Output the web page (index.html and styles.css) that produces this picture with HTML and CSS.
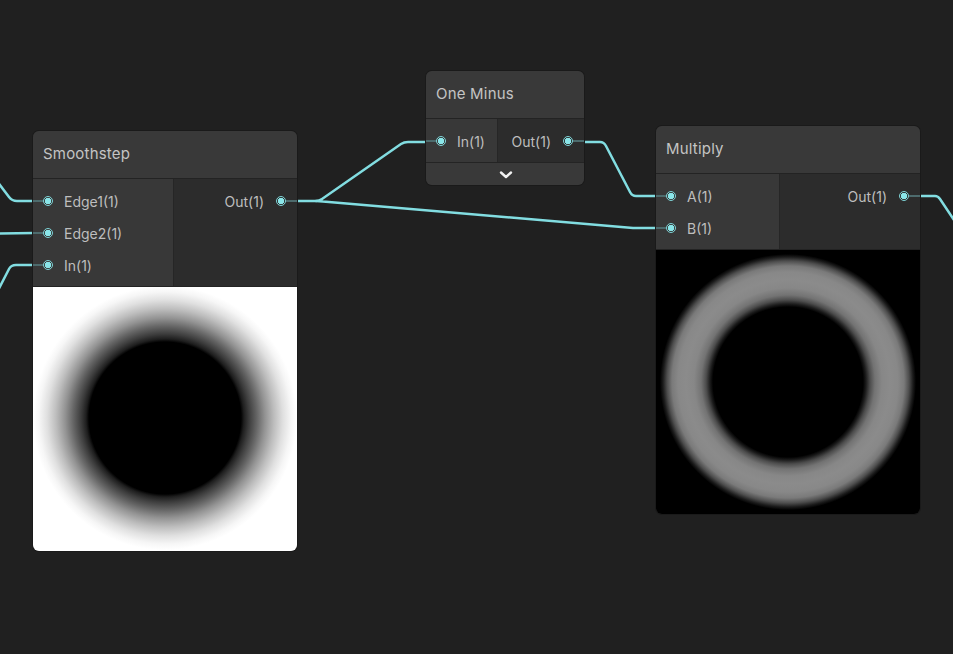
FILE: index.html
```html
<!DOCTYPE html>
<html>
<head>
<meta charset="utf-8">
<link rel="stylesheet" href="styles.css">
</head>
<body>
<div class="canvas">
  <svg class="edges" width="953" height="654" viewBox="0 0 953 654">
    <g fill="none" stroke="#82dde1" stroke-width="2.5" stroke-linejoin="round" stroke-linecap="round">
      <path d="M -10 172 L 9 197 Q 12 201 17 201 L 34 201"/>
      <path d="M -4 233.5 L 34 233"/>
      <path d="M -8 302 L 9 269 Q 11 265 16 265 L 34 265"/>
      <path d="M 296 201 L 316 201 Q 319 201 322 199 L 401 144 Q 404 142 408 142 L 427 142"/>
      <path d="M 316 201 Q 319 201 323 201.5 L 633 228 L 657 228"/>
      <path d="M 583 142 L 600 142 Q 604 142 606 146 L 630 192 Q 632 196 636 196 L 657 196"/>
      <path d="M 919 196 L 935 196 Q 938 196 940 199 L 958 226"/>
    </g>
  </svg>

  <div class="node n-smooth">
    <div class="node-title">Smoothstep</div>
    <div class="ports">
      <div class="inputs in-smooth">
        <div class="port in"><span class="dot"></span><span class="label">Edge1(1)</span></div>
        <div class="port in"><span class="dot"></span><span class="label">Edge2(1)</span></div>
        <div class="port in"><span class="dot"></span><span class="label">In(1)</span></div>
      </div>
      <div class="outputs">
        <div class="port out"><span class="label">Out(1)</span><span class="dot"></span></div>
      </div>
    </div>
    <div class="preview preview-smooth"></div>
  </div>

  <div class="node n-minus">
    <div class="node-title">One Minus</div>
    <div class="ports">
      <div class="inputs in-minus">
        <div class="port in"><span class="dot"></span><span class="label">In(1)</span></div>
      </div>
      <div class="outputs">
        <div class="port out"><span class="label">Out(1)</span><span class="dot"></span></div>
      </div>
    </div>
    <div class="collapse">
      <svg width="14" height="10" viewBox="0 0 14 10"><path d="M 2 2.5 L 7 7 L 12 2.5" fill="none" stroke="#f2f2f2" stroke-width="2.4" stroke-linecap="round" stroke-linejoin="round"/></svg>
    </div>
  </div>

  <div class="node n-mult">
    <div class="node-title">Multiply</div>
    <div class="ports">
      <div class="inputs in-mult">
        <div class="port in"><span class="dot"></span><span class="label">A(1)</span></div>
        <div class="port in"><span class="dot"></span><span class="label">B(1)</span></div>
      </div>
      <div class="outputs">
        <div class="port out"><span class="label">Out(1)</span><span class="dot"></span></div>
      </div>
    </div>
    <div class="preview preview-mult"></div>
  </div>
</div>
</body>
</html>
```

FILE: styles.css
```css
html, body {
  margin: 0;
  padding: 0;
  background: #202020;
}
body {
  font-family: Inter, "Noto Sans", "Liberation Sans", sans-serif;
  overflow: hidden;
}
.canvas {
  position: relative;
  width: 953px;
  height: 654px;
  background: #202020;
}
.edges {
  position: absolute;
  left: 0;
  top: 0;
  z-index: 0;
}
.node {
  position: absolute;
  z-index: 1;
  background: #2b2b2b;
  border-radius: 6px;
  overflow: hidden;
  box-shadow: 0 0 0 1px #1a1a1a;
}
.n-smooth { left: 33px; top: 131px; width: 264px; }
.n-minus  { left: 426px; top: 71px; width: 158px; }
.n-mult   { left: 656px; top: 126px; width: 264px; }

.node-title {
  background: #393939;
  border-bottom: 1px solid #232323;
  display: flex;
  align-items: center;
  padding-left: 10px;
  padding-bottom: 2px;
  box-sizing: border-box;
  height: 48px;
  font-size: 15px;
  color: #c4c4c4;
  letter-spacing: 0.2px;
}
.ports {
  display: flex;
}
.inputs {
  background: #383838;
  border-right: 1px solid #262626;
  padding: 6px 0 5px;
}
.in-smooth { width: 140px; }
.in-minus  { width: 71px; }
.in-mult   { width: 123px; }
.outputs {
  flex: 1;
  background: #2c2c2c;
  padding: 6px 0 5px;
}
.port {
  height: 32px;
  display: flex;
  align-items: center;
  position: relative;
  font-size: 14px;
  color: #bebebe;
}
.port.in {
  padding-left: 10px;
  gap: 11px;
}
.port.out {
  justify-content: flex-end;
  padding-right: 11px;
  gap: 12px;
}
.dot {
  width: 10px;
  height: 10px;
  box-sizing: border-box;
  border-radius: 50%;
  border: 1px solid #7fd4d7;
  background: radial-gradient(circle, #8ae6e9 0 2.9px, rgba(0,0,0,0) 3.4px);
  position: relative;
  flex: none;
}
.port.in::before {
  content: "";
  position: absolute;
  left: 0;
  width: 10px;
  height: 2.5px;
  top: 50%;
  margin-top: -1.25px;
  background: #4d6b6d;
}
.port.out::after {
  content: "";
  position: absolute;
  right: 0;
  width: 11px;
  height: 2.5px;
  top: 50%;
  margin-top: -1.25px;
  background: #4d6b6d;
}
.preview {
  border-top: 1px solid #232323;
  width: 264px;
  height: 264px;
}
.preview-smooth {
  background: radial-gradient(circle at 132px 131px,
    #000 0 76px,
    #1e1e1e 79px,
    #3c3c3c 84px,
    #666 92px,
    #939393 100px,
    #bdbdbd 109px,
    #e0e0e0 118px,
    #f6f6f6 126px,
    #fff 132px);
}
.preview-mult {
  background: radial-gradient(circle at 132px 132px,
    #000 0 75px,
    #1c1c1c 78px,
    #4c4c4c 82px,
    #737373 87px,
    #878787 94px,
    #8b8b8b 102px,
    #888 110px,
    #7a7a7a 116px,
    #4e4e4e 121px,
    #1c1c1c 125px,
    #000 128px);
}
.collapse {
  border-top: 1px solid #242424;
  height: 22px;
  background: #393939;
  display: flex;
  align-items: center;
  justify-content: center;
}
.collapse svg {
  display: block;
  margin-left: 1px;
  margin-top: 2px;
}
```
